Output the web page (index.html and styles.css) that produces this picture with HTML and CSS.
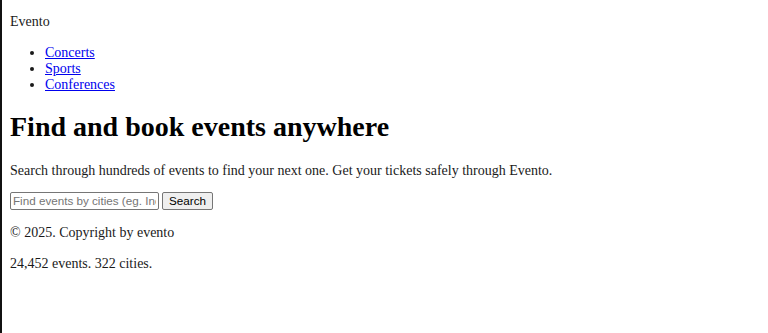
FILE: index.html
```html
<!DOCTYPE html>
<html lang="en">
<head>
<meta charset="utf-8">
<title>Evento</title>
<link rel="stylesheet" href="styles.css">
</head>
<body>
<header class="site-header">
  <p class="logo">Evento</p>
  <nav>
    <ul class="nav-list">
      <li><a href="#">Concerts</a></li>
      <li><a href="#">Sports</a></li>
      <li><a href="#">Conferences</a></li>
    </ul>
  </nav>
</header>
<main>
  <h1 class="title">Find and book events anywhere</h1>
  <p class="lead">Search through hundreds of events to find your next one. Get your tickets safely through Evento.</p>
  <form class="search">
    <input class="search-input" type="text" placeholder="Find events by cities (eg. Indianapolis)">
    <button class="search-btn" type="button">Search</button>
  </form>
</main>
<footer class="site-footer">
  <p>&copy; 2025. Copyright by evento</p>
  <p>24,452 events. 322 cities.</p>
</footer>
</body>
</html>
```

FILE: styles.css
```css
html {
  border-left: 2px solid #111;
  min-height: 100%;
  box-sizing: border-box;
}
body {
  display: flow-root;
  margin: 0;
  padding: 7px 7px 7px 8px;
  font-family: "Liberation Serif", "Times New Roman", serif;
  font-size: 14px;
  color: #1a1a1a;
}
.logo {
  margin: 7px 0 15px;
}
.nav-list {
  padding-left: 35px;
  margin: 15px 0 14px;
}
.nav-list a {
  color: #0000ee;
}
.title {
  color: #000;
  font-size: 28px;
  margin: 17.76px 0 19.76px;
}
.lead {
  margin: 0 0 13px;
}
.search {
  display: flex;
  align-items: center;
  gap: 3px;
  margin: 13px 0 15px;
}
.search-input {
  box-sizing: border-box;
  width: 149px;
  height: 18px;
  padding: 1px 2px;
  border: 1px solid #767676;
  border-radius: 2px;
  font-family: "Liberation Sans", Arial, sans-serif;
  font-size: 11.67px;
  color: #000;
}
.search-input::placeholder {
  color: #757575;
}
.search-btn {
  box-sizing: border-box;
  width: 51px;
  height: 18px;
  padding: 0;
  border: 1px solid #767676;
  border-radius: 2px;
  background: #efefef;
  font-family: "Liberation Sans", Arial, sans-serif;
  font-size: 11.67px;
  color: #000;
}
.site-footer p {
  margin: 15px 0;
}
```
